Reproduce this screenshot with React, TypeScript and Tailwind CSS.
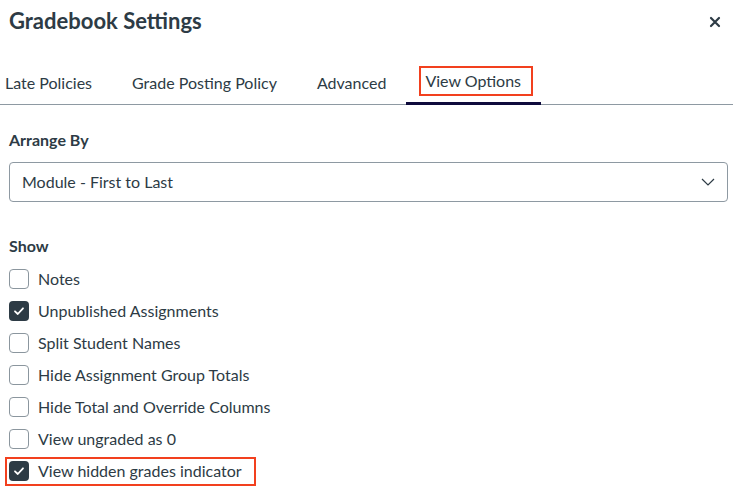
import React from "react";

const items: { label: string; checked: boolean; highlight?: boolean }[] = [
  { label: "Notes", checked: false },
  { label: "Unpublished Assignments", checked: true },
  { label: "Split Student Names", checked: false },
  { label: "Hide Assignment Group Totals", checked: false },
  { label: "Hide Total and Override Columns", checked: false },
  { label: "View ungraded as 0", checked: false },
  { label: "View hidden grades indicator", checked: true, highlight: true },
];

function Box({ checked }: { checked: boolean }) {
  return checked ? (
    <span className="flex h-[20px] w-[20px] shrink-0 items-center justify-center rounded-[4px] bg-[#2d3b45]">
      <svg width="12" height="12" viewBox="0 0 12 12" fill="none">
        <path d="M2 6.3 L4.8 9 L10 3.3" stroke="white" strokeWidth="1.8" strokeLinecap="round" strokeLinejoin="round" />
      </svg>
    </span>
  ) : (
    <span className="block h-[20px] w-[20px] shrink-0 rounded-[4px] border border-[#8b969e] bg-white" />
  );
}

export default function App() {
  return (
    <div className="h-[489px] w-[733px] overflow-hidden bg-white text-[#2d3b45]" style={{ fontFamily: "Lato, 'Open Sans', sans-serif" }}>
      <div className="flex h-[42px] items-center justify-between pl-[9px] pr-[12px]">
        <h1 className="text-[22px] font-bold leading-none">Gradebook Settings</h1>
        <svg width="12" height="12" viewBox="0 0 12 12" className="mt-[1px]">
          <path d="M2 2 L10 10 M10 2 L2 10" stroke="#2d3b45" strokeWidth="2.2" strokeLinecap="round" />
        </svg>
      </div>
      <div className="mt-[20px] flex h-[43px] border-b border-[#8e99a2]">
        <div className="-ml-[15px] flex">
          <div className="flex items-center px-5 text-[16px]">Late Policies</div>
          <div className="flex items-center px-5 text-[16px]">Grade Posting Policy</div>
          <div className="flex items-center px-5 text-[16px]">Advanced</div>
          <div className="-mb-px flex items-center border-b-[3px] border-[#0e0a3c] pl-[13px] pr-[8px] text-[16px]">
            <span className="-mt-[2px] border-2 border-[#f2401e] pl-[4px] pr-[10px] py-[3px] leading-[20px]">View Options</span>
          </div>
        </div>
      </div>
      <div className="pl-[9px] pr-[5px]">
        <div className="mt-[25px] text-[16px] font-bold leading-[20px]">Arrange By</div>
        <div className="mt-[12px] flex h-[40px] items-center justify-between rounded-[4px] border border-[#8e99a2] pl-[12px] pr-[12px]">
          <span className="text-[16px]">Module - First to Last</span>
          <svg width="14" height="8" viewBox="0 0 14 8" fill="none">
            <path d="M1 1 L7 7 L13 1" stroke="#2d3b45" strokeWidth="1.2" />
          </svg>
        </div>
        <div className="mt-[34px] text-[16px] font-bold leading-[20px]">Show</div>
        <div className="mt-[13px] flex flex-col gap-[12px]">
          {items.map((it) =>
            it.highlight ? (
              <div key={it.label} className="-mx-[4px] -my-[4px] flex w-[251px] items-center gap-[9px] border-2 border-[#f2401e] px-[2px] pt-[2px] pb-[3px] leading-[20px]">
                <Box checked={it.checked} />
                <span className="text-[16px]">{it.label}</span>
              </div>
            ) : (
              <div key={it.label} className="flex h-[20px] items-center gap-[9px]">
                <Box checked={it.checked} />
                <span className="text-[16px] leading-[20px]">{it.label}</span>
              </div>
            )
          )}
        </div>
      </div>
    </div>
  );
}
